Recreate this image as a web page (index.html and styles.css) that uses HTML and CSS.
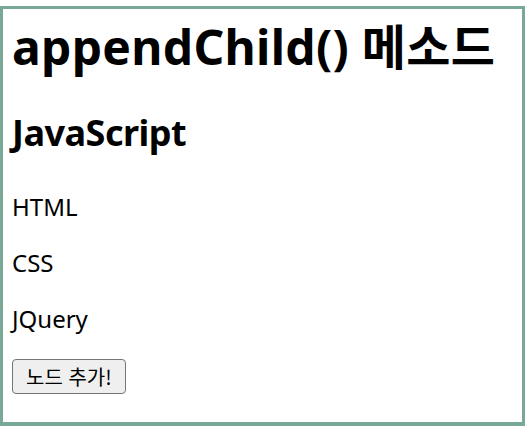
FILE: index.html
```html
<!DOCTYPE html>
<html lang="ko">
<head>
    <meta charset="UTF-8">
    <meta name="viewport" content="width=device-width, initial-scale=1.0">
    <title>appendChild() 메소드</title>
    <link rel="stylesheet" href="styles.css">
</head>
<body>
    <div class="frame">
        <h1>appendChild() 메소드</h1>
        <h2>JavaScript</h2>
        <div id="list">
            <p>HTML</p>
            <p>CSS</p>
            <p>JQuery</p>
        </div>
        <button type="button" id="add-btn">노드 추가!</button>
    </div>

    <script>
        document.getElementById('add-btn').addEventListener('click', function() {
            const node = document.createElement('p');
            node.textContent = 'React';
            document.getElementById('list').appendChild(node);
        });
    </script>
</body>
</html>
```

FILE: styles.css
```css
html, body {
    margin: 0;
    height: 100%;
}

body {
    font-family: "Noto Sans", "Noto Sans CJK KR", sans-serif;
    color: #000;
    background: #fff;
    overflow: hidden;
}

.frame {
    box-sizing: border-box;
    margin: 6px 4px 0 0;
    border: 3px solid #7aa897;
    border-bottom-width: 4px;
    padding: 0 9px;
    height: 420px;
}

h1 {
    font-size: 48px;
    line-height: 64px;
    letter-spacing: 0.3px;
    margin: 6px 0 30px;
}

h2 {
    font-size: 36px;
    line-height: 48px;
    letter-spacing: -0.5px;
    margin: 30px 0 34px;
}

p {
    font-size: 24px;
    line-height: 32px;
    margin: 24px 0;
}

#list p:first-child {
    margin-top: 0;
}

button {
    display: block;
    font-family: "Noto Sans CJK KR", sans-serif;
    font-size: 20px;
    height: 35px;
    padding: 0 13px;
    margin: 23px 0 0;
    border: 1px solid #767676;
    border-radius: 4px;
    background: #efefef;
    color: #000;
}
```
